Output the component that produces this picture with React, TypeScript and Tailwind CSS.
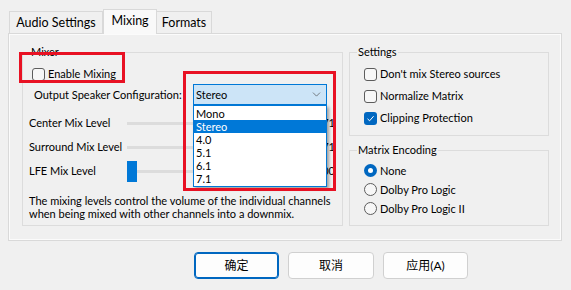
import { ChevronDown } from "lucide-react";

const FONT = "font-['Lato',_'Noto_Sans_CJK_SC',_sans-serif]";

function Checkbox({ label, checked }: { label: string; checked?: boolean }) {
  return (
    <div className="flex items-center gap-[3px] whitespace-nowrap">
      {checked ? (
        <span className="flex size-[13px] items-center justify-center rounded-[3px] bg-[#0067c0]">
          <svg width="9" height="9" viewBox="0 0 9 9">
            <path d="M1.5 4.8 L3.6 6.8 L7.6 2.2" fill="none" stroke="white" strokeWidth="1" />
          </svg>
        </span>
      ) : (
        <span className="size-[13px] rounded-[3px] border border-[#5c5c5c] bg-[#f7f7f7]" />
      )}
      <span>{label}</span>
    </div>
  );
}

function Radio({ label, checked }: { label: string; checked?: boolean }) {
  return (
    <div className="flex items-center gap-[3px] whitespace-nowrap">
      {checked ? (
        <span className="flex size-[13px] items-center justify-center rounded-full bg-[#0067c0]">
          <span className="size-[5px] rounded-full bg-white" />
        </span>
      ) : (
        <span className="size-[13px] rounded-full border border-[#5c5c5c] bg-[#f7f7f7]" />
      )}
      <span>{label}</span>
    </div>
  );
}

function SliderRow({ label, value, thumb }: { label: string; value: string; thumb?: boolean }) {
  return (
    <div className="flex h-[24px] items-center whitespace-nowrap pl-[6px]">
      <span className="w-[98px] shrink-0">{label}</span>
      <div className="relative flex h-full w-[180px] shrink-0 items-center">
        <div className="h-[3px] w-full bg-[#dcdcdc]" />
        {thumb && <div className="absolute left-0 top-[2px] h-[21px] w-[10px] bg-[#0078d7]" />}
      </div>
      <span className="w-[28px] shrink-0 text-right">{value}</span>
    </div>
  );
}

const SPEAKERS = ["Mono", "Stereo", "4.0", "5.1", "6.1", "7.1"];

export default function App() {
  return (
    <div className={`relative h-[290px] w-[571px] overflow-hidden bg-[#f0f0f0] text-[11px] leading-[16px] text-black ${FONT}`}>
      {/* tabs */}
      <div className="flex h-[33px] items-end whitespace-nowrap pl-[9px] text-[12.5px]">
        <div className="flex h-[22px] w-[94px] items-center justify-center border border-b-0 border-[#d9d9d9] bg-[#f0f0f0]">
          Audio Settings
        </div>
        <div className="relative z-10 -mb-px flex h-[25px] w-[54px] items-center justify-center border border-b-0 border-[#d9d9d9] bg-[#f9f9f9] pb-[2px]">
          Mixing
        </div>
        <div className="flex h-[22px] w-[55px] items-center justify-center border border-b-0 border-l-0 border-[#d9d9d9] bg-[#f0f0f0]">
          Formats
        </div>
      </div>

      {/* tab page */}
      <div className="ml-[8px] h-[208px] w-[554px] border border-[#d9d9d9]">
        <div className="flex h-full gap-[6px] border border-[#fbfbfb] pl-[12px] pt-[9px]">
          <fieldset className="h-[182px] w-[321px] min-w-0 shrink-0 border border-[#dcdcdc]">
            <legend className="ml-[7px] px-[1px]">Mixer</legend>
            <div className="mt-[6px] pl-[9px]">
              <Checkbox label="Enable Mixing" />
            </div>
            <div className="mt-[2px] flex h-[21px] items-center whitespace-nowrap pl-[11px]">
              <span className="w-[159px] shrink-0">Output Speaker Configuration:</span>
              <div className="flex h-[21px] w-[134px] shrink-0 items-center justify-between border border-[#0078d7] bg-[#cce4f7] pl-[2px] pr-[3px]">
                <span>Stereo</span>
                <ChevronDown size={13} strokeWidth={1.2} className="text-[#444]" />
              </div>
            </div>
            <div className="mt-[6px]">
              <SliderRow label="Center Mix Level" value="0.71" />
              <SliderRow label="Surround Mix Level" value="0.71" />
              <SliderRow label="LFE Mix Level" value="1.00" thumb />
            </div>
            <p className="mt-[11px] whitespace-nowrap pl-[6px] leading-[13px]">
              The mixing levels control the volume of the individual channels
              <br />
              when being mixed with other channels into a downmix.
            </p>
          </fieldset>

          <div className="flex flex-col gap-[6px]">
            <fieldset className="h-[92px] w-[200px] min-w-0 border border-[#dcdcdc]">
              <legend className="ml-[7px] px-[1px]">Settings</legend>
              <div className="flex flex-col pl-[14px] pt-[3px]">
                <div className="flex h-[22px] items-center"><Checkbox label="Don't mix Stereo sources" /></div>
                <div className="flex h-[22px] items-center"><Checkbox label="Normalize Matrix" /></div>
                <div className="flex h-[22px] items-center"><Checkbox label="Clipping Protection" checked /></div>
              </div>
            </fieldset>
            <fieldset className="h-[84px] w-[200px] min-w-0 border border-[#dcdcdc]">
              <legend className="ml-[7px] px-[1px]">Matrix Encoding</legend>
              <div className="flex flex-col pl-[14px] pt-[3px]">
                <div className="flex h-[19px] items-center"><Radio label="None" checked /></div>
                <div className="flex h-[19px] items-center"><Radio label="Dolby Pro Logic" /></div>
                <div className="flex h-[19px] items-center"><Radio label="Dolby Pro Logic II" /></div>
              </div>
            </fieldset>
          </div>
        </div>
      </div>

      {/* buttons */}
      <div className="mt-[11px] flex gap-[9px] pl-[194px] text-[12px]">
        <button className="h-[27px] w-[85px] rounded-[4px] border border-[#0067c0] bg-[#fdfdfd] shadow-[inset_0_0_0_1px_#0067c0]">确定</button>
        <button className="h-[27px] w-[86px] rounded-[4px] border border-[#d0d0d0] bg-[#fdfdfd]">取消</button>
        <button className="h-[27px] w-[85px] rounded-[4px] border border-[#d0d0d0] bg-[#fdfdfd]">应用(A)</button>
      </div>

      {/* open dropdown list */}
      <div className="absolute left-[193px] top-[105px] w-[134px] border border-[#0078d7] bg-white py-px shadow-[2px_2px_3px_rgba(0,0,0,0.35)]">
        {SPEAKERS.map((s) => (
          <div
            key={s}
            className={`h-[13px] pl-[2px] leading-[13px] ${s === "Stereo" ? "bg-[#0078d7] text-white" : ""}`}
          >
            {s}
          </div>
        ))}
      </div>

      {/* annotation boxes */}
      <div className="absolute left-[19px] top-[52px] h-[31px] w-[106px] border-[3px] border-[#e81123]" />
      <div className="absolute left-[183px] top-[71px] h-[120px] w-[153px] border-[3px] border-[#e81123]" />
    </div>
  );
}
